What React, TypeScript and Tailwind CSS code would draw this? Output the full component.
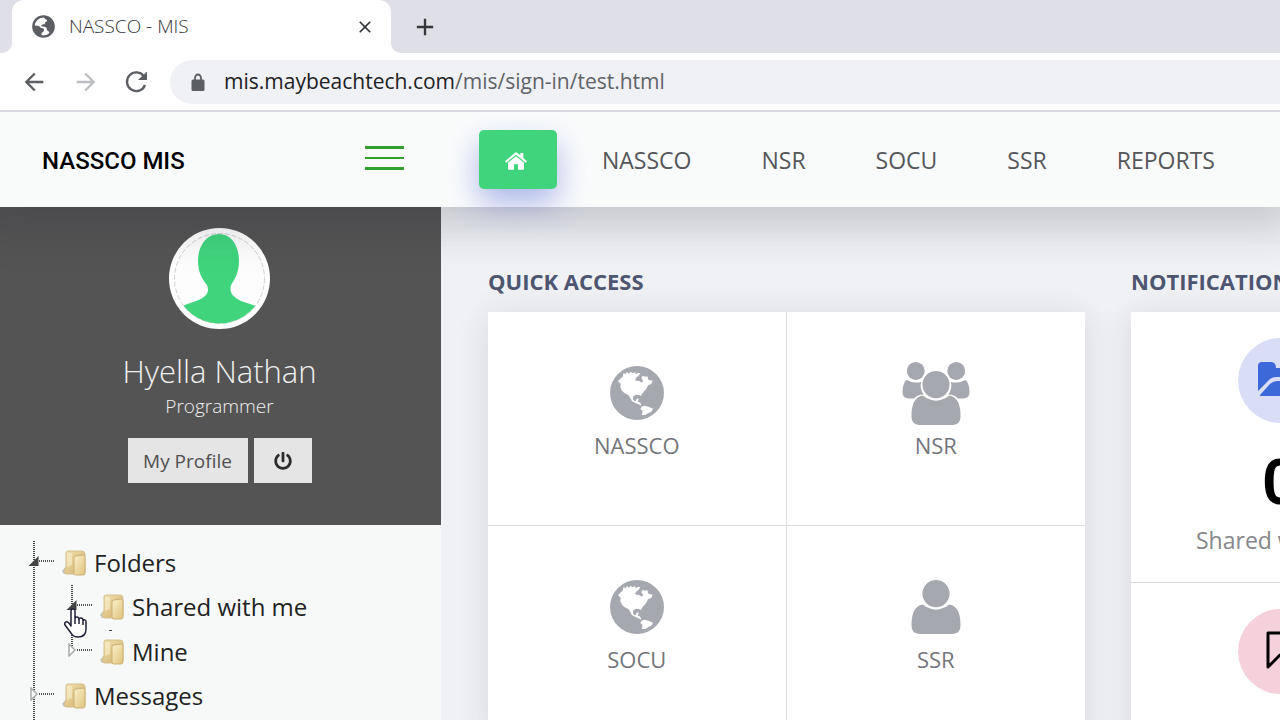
import { FaPowerOff } from "react-icons/fa";
import { MdClose, MdAdd, MdArrowBack, MdArrowForward } from "react-icons/md";

const navLinks = ["NASSCO", "NSR", "SOCU", "SSR", "REPORTS"];

const TabGlobeIcon = () => (
  <svg viewBox="0 0 68 68" className="size-[23px]" aria-hidden="true">
    <circle cx="34" cy="34" r="30" fill="#fff" stroke="#5b5e63" strokeWidth="7" />
    <path
      fill="#5b5e63"
      d="M36 4 C52 5 63 18 64 34 C64 44 60 53 53 58 C52 50 49 47 44 45 L43 38 C40 34 34 35 27 33 C27 28 32 27 37 27 C39 26 38 21 41 20 C45 20 46 17 43 14 C38 13 35 10 36 4 Z M4 31 L18 32 C23 34 24 38 30 39 C36 40 37 42 35 47 C32 51 28 51 28 56 L28 63 C14 60 4 48 4 31 Z"
    />
  </svg>
);

const LockIcon = () => (
  <svg viewBox="0 0 20 20" className="size-5" aria-hidden="true">
    <path d="M7 9 V6 a3 3.500 0 0 1 6 0 V9" fill="none" stroke="#5b5e63" strokeWidth="1.800" />
    <rect x="3.500" y="7.500" width="13" height="11.500" rx="1.500" fill="#5b5e63" />
  </svg>
);

const ReloadIcon = () => (
  <svg viewBox="0 0 24 24" className="size-6" aria-hidden="true">
    <path d="M20 6.500 A9.300 9.300 0 1 0 21 15" fill="none" stroke="#5b5e63" strokeWidth="2.300" />
    <path d="M23 1.500 V10 H14 Z" fill="#5b5e63" />
  </svg>
);

const HomeIcon = () => (
  <svg viewBox="0 0 66 54" className="h-[18px] w-[22px]" fill="#fff" aria-hidden="true">
    <path d="M0 28 L30 2 Q33 0 36 2 L46 10 V3 H55 V18 L66 28 L62 32 L33 8 L4 32 Z" />
    <path d="M9 32 L33 13 L57 32 V50 Q57 53 54 53 H39 V37 H27 V53 H12 Q9 53 9 50 Z" />
  </svg>
);

const GlobeIcon = () => (
  <svg viewBox="0 0 162 162" className="size-[54px]" aria-hidden="true">
    <circle cx="81" cy="81" r="81" fill="#a6a8b0" />
    <path
      fill="#fff"
      d="M24 46 L31 38 L38 32 L41 20 L46 25 L51 18 L56 23 L62 17 L68 22 L75 18 L77 25 L84 20 L91 22 L86 29 L80 34 L75 41 L79 44 L88 45 L96 50 L99 44 L94 37 L98 29 L106 32 L112 31 L115 41 L128 44 L124 54 L114 58 L109 68 L103 76 L96 83 L93 91 L90 88 L78 86 L70 91 L69 100 L73 106 L78 104 L80 98 L86 97 L84 107 L91 110 L94 119 L84 114 L75 110 L66 106 L61 96 L55 87 L43 81 L36 74 L31 64 L32 53 Z M95 122 L103 119 L115 122 L129 128 L124 137 L114 142 L106 147 L95 147 L98 136 L91 129 Z"
    />
  </svg>
);

const GroupIcon = () => (
  <svg viewBox="0 0 204 190" className="h-[63px] w-[68px]" fill="#a6a8b0" aria-hidden="true">
    <circle cx="41" cy="27" r="27" />
    <circle cx="163" cy="27" r="27" />
    <path d="M14 54 Q34 66 57 60 Q52 80 65 98 Q46 98 36 110 H18 Q1 108 1 92 Q1 62 14 54 Z" />
    <path d="M190 54 Q170 66 147 60 Q152 80 139 98 Q158 98 168 110 H186 Q203 108 203 92 Q203 62 190 54 Z" />
    <circle cx="102" cy="68" r="41" />
    <path d="M62 101 Q102 132 142 101 Q176 106 176 164 Q176 188 152 190 H52 Q28 188 28 164 Q28 106 62 101 Z" />
  </svg>
);

const PersonIcon = () => (
  <svg viewBox="0 0 148 163" className="h-[54px] w-[50px]" fill="#a6a8b0" aria-hidden="true">
    <circle cx="74" cy="41" r="41" />
    <path d="M34 74 Q74 105 114 74 Q148 79 148 137 Q148 161 124 163 H24 Q0 161 0 137 Q0 79 34 74 Z" />
  </svg>
);

const quickLinks = [
  { label: "NASSCO", icon: <GlobeIcon /> },
  { label: "NSR", icon: <GroupIcon /> },
  { label: "SOCU", icon: <GlobeIcon /> },
  { label: "SSR", icon: <PersonIcon /> },
];

const FolderIcon = () => (
  <svg viewBox="0 0 24 26" className="h-[26px] w-6 shrink-0" aria-hidden="true">
    <defs>
      <linearGradient id="folderBack" x1="0" y1="0" x2="1" y2="1">
        <stop offset="0" stopColor="#f3e3b4" />
        <stop offset="1" stopColor="#cfae66" />
      </linearGradient>
      <linearGradient id="folderFront" x1="0" y1="0" x2="1" y2="1">
        <stop offset="0" stopColor="#fbf1cc" />
        <stop offset="1" stopColor="#dfc27c" />
      </linearGradient>
    </defs>
    <path d="M0 21 L5 15 L7 24 L2 24 Z" fill="#c4c4c0" />
    <path d="M4 3 Q4 1 6 1 H20 Q23 1 23 4 V22 L14 24 H4 L2 21 L4 17 Z" fill="url(#folderBack)" stroke="#d6bf8c" strokeWidth="1" />
    <path d="M12 8 Q12 6 14 6 L21 5 Q23 5 23 7 V23 Q23 25 21 25 H14 Q12 25 12 23 Z" fill="url(#folderFront)" stroke="#cdb075" strokeWidth="1" />
    <path d="M5 3 H10 V15 L5 17 Z" fill="#faf0cf" opacity="0.6" />
  </svg>
);

const TreeRow = ({ label, open = false }: { label: string; open?: boolean }) => (
  <div className="flex h-11 items-center">
    <button type="button" aria-label={`Toggle ${label}`} aria-expanded={open} className="z-10 -ml-2 w-3 pb-1">
      <svg viewBox="0 0 12 14" className="h-[14px] w-3">
        {open ? (
          <path d="M11.500 2 V12 H1.500 Z" fill="#444" />
        ) : (
          <path d="M4 1 L10 7 L4 13 Z" fill="#fff" stroke="#aaa" strokeWidth="1.500" />
        )}
      </svg>
    </button>
    <span className="mb-1 h-[2px] w-4 bg-[repeating-linear-gradient(90deg,#555_0_1px,transparent_1px_2px)]" />
    <a href="#" className="ml-[7px] flex items-center gap-2 text-[24px] leading-8 font-medium text-[#222]">
      <FolderIcon />
      {label}
    </a>
  </div>
);

const TreeLine = ({ className }: { className: string }) => (
  <span className={`w-[2px] shrink-0 bg-[repeating-linear-gradient(180deg,#444_0_1px,transparent_1px_2px)] ${className}`} />
);

const BrowserBar = () => (
  <div className="relative z-30 font-['Open_Sans',sans-serif]">
    <div className="flex h-[53px] items-stretch bg-[#dedfe7]">
      <div className="w-3 bg-white">
        <div className="h-full rounded-br-[10px] bg-[#dedfe7]" />
      </div>
      <div className="flex w-[379px] items-center rounded-t-[12px] bg-white pr-4 pl-5">
        <TabGlobeIcon />
        <span className="ml-[14px] flex-1 text-[19px] font-light text-[#333539]">NASSCO - MIS</span>
        <button type="button" aria-label="Close tab">
          <MdClose className="size-5 text-[#35373b]" stroke="currentColor" />
        </button>
      </div>
      <div className="flex-1 bg-white">
        <div className="flex h-full items-center rounded-bl-[10px] bg-[#dedfe7] pl-5">
          <button type="button" aria-label="New tab">
            <MdAdd className="size-7 text-[#35373b]" stroke="currentColor" />
          </button>
        </div>
      </div>
    </div>
    <div className="flex h-[59px] items-center border-b-2 border-[#d8d9e0] bg-white pl-5">
      <button type="button" aria-label="Back">
        <MdArrowBack className="size-7 text-[#5b5e63]" />
      </button>
      <button type="button" aria-label="Forward" className="ml-6">
        <MdArrowForward className="size-7 text-[#bcbec2]" />
      </button>
      <button type="button" aria-label="Reload" className="ml-6">
        <ReloadIcon />
      </button>
      <div className="ml-[22px] flex h-11 flex-1 items-center rounded-l-full bg-[#f0f1f4] pl-[18px]">
        <LockIcon />
        <a href="#" className="ml-4 text-[21px] text-[#5f6368]">
          <span className="text-[#202124]">mis.maybeachtech.com</span>/mis/sign-in/test.html
        </a>
      </div>
    </div>
  </div>
);

const Header = () => (
  <header className="relative z-20 flex h-[95px] items-center bg-[#f9fbfb] shadow-[0_6px_40px_16px_rgba(40,40,60,0.2)]">
    <div className="flex w-[441px] shrink-0 items-center justify-between pr-[37px] pl-[42px]">
      <a href="#" className="pt-[2px] font-[Roboto,sans-serif] text-[24px] font-medium text-black">
        NASSCO MIS
      </a>
      <button type="button" aria-label="Toggle menu" className="mb-1 flex w-[39px] flex-col gap-2">
        <span className="h-[3px] w-full bg-[#339f2c]" />
        <span className="h-[2px] w-full bg-[#339f2c]" />
        <span className="h-[3px] w-full bg-[#339f2c]" />
      </button>
    </div>
    <nav className="ml-[38px] flex items-center">
      <a
        href="#"
        aria-label="Home"
        className="mr-[10px] flex h-[59px] w-[78px] items-center justify-center rounded-[5px] bg-[#40d57d] pt-[2px] pr-1 shadow-[0_14px_30px_rgba(80,100,210,0.45)]">
        <HomeIcon />
      </a>
      {navLinks.map((item) => (
        <a key={item} href="#" className="px-[35px] pt-px text-[23px] text-[#54565a]">
          {item}
        </a>
      ))}
    </nav>
  </header>
);

const Profile = () => (
  <div className="flex h-[318px] flex-col items-center bg-[#545454] pt-[21px] pr-[2px] text-[#f0f0f0]">
    <svg viewBox="0 0 101 101" className="size-[101px] shrink-0" role="img" aria-label="Hyella Nathan">
      <defs>
        <clipPath id="avatarClip">
          <circle cx="50.500" cy="50.500" r="45" />
        </clipPath>
      </defs>
      <circle cx="50.500" cy="50.500" r="50.500" fill="#fff" />
      <circle cx="50.500" cy="50.500" r="45" fill="#fdfdfd" stroke="#bbb" strokeWidth="0.700" strokeDasharray="5 2" />
      <path
        clipPath="url(#avatarClip)"
        fill="#40d57d"
        d="M50 6 C62 6 70 17 70 33 C70 44 66 51 62 57 C60 65 64 69 72 73 L90 79 V101 H10 V79 L27 73 C37 69 41 65 38 57 C33 51 29 44 29 33 C29 17 38 6 50 6 Z"
      />
    </svg>
    <h2 className="mt-[22px] text-[31px] leading-10 font-light">Hyella Nathan</h2>
    <p className="mt-px text-[19px] leading-7 font-light">Programmer</p>
    <div className="mt-[18px] flex gap-[6px]">
      <button type="button" className="h-[45px] w-[120px] bg-[#e5e5e5] pt-[2px] text-[19px] text-[#505050]">
        My Profile
      </button>
      <button type="button" aria-label="Log out" className="flex h-[45px] w-[58px] items-center justify-center bg-[#e5e5e5]">
        <FaPowerOff className="size-[18px] text-[#2c2c2c]" />
      </button>
    </div>
  </div>
);

const FolderTree = () => (
  <div className="relative flex flex-1 bg-[#f6f9f8] pt-4 pl-[33px]">
    <TreeLine className="self-stretch" />
    <ul>
      <li>
        <TreeRow label="Folders" open />
        <div className="flex pl-9">
          <TreeLine className="h-[68px]" />
          <ul>
            <li>
              <TreeRow label="Shared with me" open />
            </li>
            <li className="pt-px">
              <TreeRow label="Mine" />
            </li>
          </ul>
        </div>
      </li>
      <li>
        <TreeRow label="Messages" />
      </li>
    </ul>
    <span className="absolute top-[105px] left-[109px] h-px w-[3px] bg-[#444]" />
    <svg viewBox="0 0 24 30" className="absolute top-[83px] left-[64px] z-20 h-[30px] w-6" aria-hidden="true">
      <path
        d="M7 3 Q7 1 9 1 Q11 1 11 3 V11 Q11 9 13 9 Q15 9 15 12 Q15 10 17 10 Q19 10 19 13 Q20 11 21 12 Q22 12 22 14 V21 Q22 29 14 29 Q9 29 7 25 L1 17 Q0 15 2 14 Q4 13 7 18 Z M11 11 V16 M15 12 V16 M19 13 V17"
        fill="#fff"
        stroke="#22223a"
        strokeWidth="1.500"
        strokeLinejoin="round"
      />
    </svg>
  </div>
);

const QuickAccess = () => (
  <section className="w-[597px] shrink-0">
    <h3 className="text-[22px] leading-8 font-bold text-[#4d5571]">QUICK ACCESS</h3>
    <div className="mt-[15px] grid grid-cols-2 bg-white shadow-[0_4px_32px_rgba(40,40,70,0.12)]">
      {quickLinks.map((item) => (
        <a
          key={item.label}
          href="#"
          className="flex h-[214px] flex-col items-center border-b border-[#dcdfe2] pt-[49px] text-[22px] leading-8 text-[#74767c] odd:border-r">
          <span className="flex h-16 items-center justify-center">{item.icon}</span>
          <span className="mt-1">{item.label}</span>
        </a>
      ))}
    </div>
  </section>
);

const Notifications = () => (
  <section className="w-[298px] shrink-0">
    <h3 className="text-[22px] leading-8 font-bold text-[#4d5571]">NOTIFICATIONS</h3>
    <div className="mt-[15px] bg-white shadow-[0_4px_32px_rgba(40,40,70,0.12)]">
      <div className="flex h-[271px] flex-col items-center border-b border-[#d9dadd] pt-[26px]">
        <span className="flex size-[85px] items-center justify-center rounded-full bg-[#d9def6]">
          <svg viewBox="0 0 46 36" className="mb-1 h-9 w-[46px]" fill="#3c68d8" aria-hidden="true">
            <path d="M1 5 Q1 1 5 1 H14 Q19 1 19 7 H35 Q39 7 39 11 V16 H19 Q14 16 10 21 L1 30 Z" />
            <path d="M3 34 L12 24 Q16 20 20 20 H45 L37 32 Q36 35 32 35 H4 Q2 35 3 34 Z" />
          </svg>
        </span>
        <span className="mt-6 font-['Liberation_Sans',Arial,sans-serif] text-[64px] leading-[70px] font-bold text-black">0</span>
        <span className="mt-[7px] text-[23px] leading-8 text-[#85868a]">Shared with me</span>
      </div>
      <div className="flex h-[271px] flex-col items-center pt-[26px]">
        <span className="flex size-[85px] items-center justify-center rounded-full bg-[#f5d1dc]">
          <svg viewBox="0 0 28 38" className="mb-1 h-[38px] w-7" fill="none" stroke="#000" strokeWidth="3" strokeLinejoin="round" aria-hidden="true">
            <path d="M2 2 H26 V36 L14 24 L2 36 Z" />
          </svg>
        </span>
      </div>
    </div>
  </section>
);

export default function App() {
  return (
    <div className="flex h-screen flex-col overflow-hidden font-['Open_Sans',sans-serif]">
      <BrowserBar />
      <Header />
      <div className="flex min-h-0 flex-1">
        <aside className="flex w-[441px] shrink-0 flex-col">
          <Profile />
          <FolderTree />
        </aside>
        <main className="flex min-w-0 flex-1 gap-[46px] overflow-hidden bg-[#eff1f5] pt-[58px] pl-[47px]">
          <QuickAccess />
          <Notifications />
        </main>
      </div>
    </div>
  );
}
